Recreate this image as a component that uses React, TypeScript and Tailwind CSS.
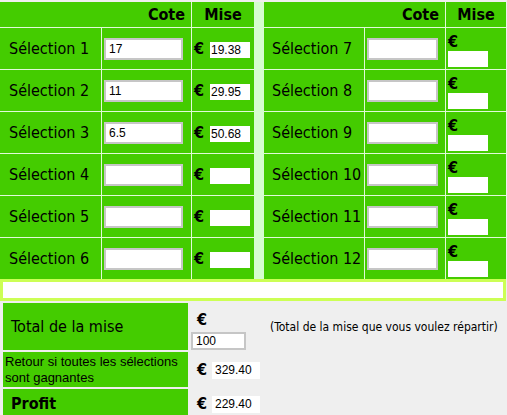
import React from "react";

type Row = { n: number; c?: string; m?: string };

const rowsL: Row[] = [
  { n: 1, c: "17", m: "19.38" },
  { n: 2, c: "11", m: "29.95" },
  { n: 3, c: "6.5", m: "50.68" },
  { n: 4 },
  { n: 5 },
  { n: 6 },
];
const rowsR: Row[] = [{ n: 7 }, { n: 8 }, { n: 9 }, { n: 10 }, { n: 11 }, { n: 12 }];

function Euro() {
  return <span className="font-bold text-[16px] leading-[18px]">€</span>;
}

function CoteInput({ v, w }: { v?: string; w: string }) {
  return (
    <div
      className={`${w} h-[22px] ml-[2px] bg-white border-2 border-[#c6c6c6] flex items-center pl-[3px] font-['Liberation_Sans',sans-serif] text-[12px] leading-none`}
    >
      {v}
    </div>
  );
}

function MiseInput({ v }: { v?: string }) {
  return (
    <div className="w-[40px] h-[16px] bg-white flex items-center pl-[1px] font-['Liberation_Sans',sans-serif] text-[12px] leading-none">
      {v}
    </div>
  );
}

export default function App() {
  return (
    <div className="w-[507px] h-[415px] overflow-hidden bg-[#efefef] text-black font-['DejaVu_Sans_Condensed','DejaVu_Sans',sans-serif]">
      <div className="h-[2px]" />
      <div className="flex w-[506px]">
        {/* left table */}
        <div className="grid grid-cols-[101px_89px_62px] grid-rows-[25px_repeat(6,41px)] gap-px bg-[#e0fad8] w-[254px]">
          <div className="col-span-2 bg-[#44cc00] flex items-center justify-end pr-[6px] font-bold text-[16px]">
            Cote
          </div>
          <div className="bg-[#44cc00] flex items-center justify-center font-bold text-[16px]">
            Mise
          </div>
          {rowsL.map((r) => (
            <React.Fragment key={r.n}>
              <div className="bg-[#44cc00] flex items-center pl-[9px] text-[16px]">
                Sélection {r.n}
              </div>
              <div className="bg-[#44cc00] flex items-center">
                <CoteInput v={r.c} w="w-[79px]" />
              </div>
              <div className="bg-[#44cc00] flex items-center pl-[2px] gap-[6px]">
                <Euro />
                <div className="mt-[2px]">
                  <MiseInput v={r.m} />
                </div>
              </div>
            </React.Fragment>
          ))}
        </div>
        {/* strip */}
        <div className="w-[10px] bg-[#d6fdd0]" />
        {/* right table */}
        <div className="grid grid-cols-[100px_80px_60px] grid-rows-[25px_repeat(6,41px)] gap-px bg-[#e0fad8] w-[242px]">
          <div className="col-span-2 bg-[#44cc00] flex items-center justify-end pr-[6px] font-bold text-[16px]">
            Cote
          </div>
          <div className="bg-[#44cc00] flex items-center justify-center font-bold text-[16px]">
            Mise
          </div>
          {rowsR.map((r) => (
            <React.Fragment key={r.n}>
              <div className="bg-[#44cc00] flex items-center pl-[8px] text-[16px]">
                Sélection {r.n}
              </div>
              <div className="bg-[#44cc00] flex items-center">
                <CoteInput w="w-[71px]" />
              </div>
              <div className="bg-[#44cc00] flex flex-col justify-center items-start pl-[2px] pt-[2px]">
                <Euro />
                <MiseInput />
              </div>
            </React.Fragment>
          ))}
        </div>
      </div>
      {/* yellow strip */}
      <div className="w-[506px] h-[22px] border-[3px] border-[#ccff55] bg-white" />
      {/* bottom */}
      <div className="mt-[2px] pl-[3px] grid grid-cols-[185px_77px_1fr] grid-rows-[47px_35px_30px] gap-y-[2px]">
        <div className="bg-[#44cc00] flex items-center pl-[8px] text-[16px]">Total de la mise</div>
        <div className="flex flex-col items-start pl-[3px] pt-[5px]">
          <span className="pl-[6px]">
            <Euro />
          </span>
          <div className="w-[55px] h-[22px] bg-white border-2 border-[#c6c6c6] flex items-center pl-[3px] font-['Liberation_Sans',sans-serif] text-[12px] leading-none">
            100
          </div>
        </div>
        <div className="flex items-center pl-[5px] pt-[1px] text-[12px] whitespace-nowrap">
          (Total de la mise que vous voulez répartir)
        </div>

        <div className="bg-[#44cc00] flex items-center pl-[2px] font-['Liberation_Sans',sans-serif] text-[13px] leading-[16px]">
          Retour si toutes les sélections
          <br />
          sont gagnantes
        </div>
        <div className="flex items-center pl-[9px] gap-[5px] pt-[1px]">
          <Euro />
          <div className="w-[48px] h-[17px] bg-white flex items-center pl-[3px] font-['Liberation_Sans',sans-serif] text-[12px] leading-none">
            329.40
          </div>
        </div>
        <div />

        <div className="bg-[#44cc00] flex items-center pl-[8px] font-bold text-[16px]">Profit</div>
        <div className="flex items-center pl-[9px] gap-[5px]">
          <Euro />
          <div className="w-[48px] h-[17px] bg-white flex items-center pl-[3px] font-['Liberation_Sans',sans-serif] text-[12px] leading-none">
            229.40
          </div>
        </div>
        <div />
      </div>
    </div>
  );
}
